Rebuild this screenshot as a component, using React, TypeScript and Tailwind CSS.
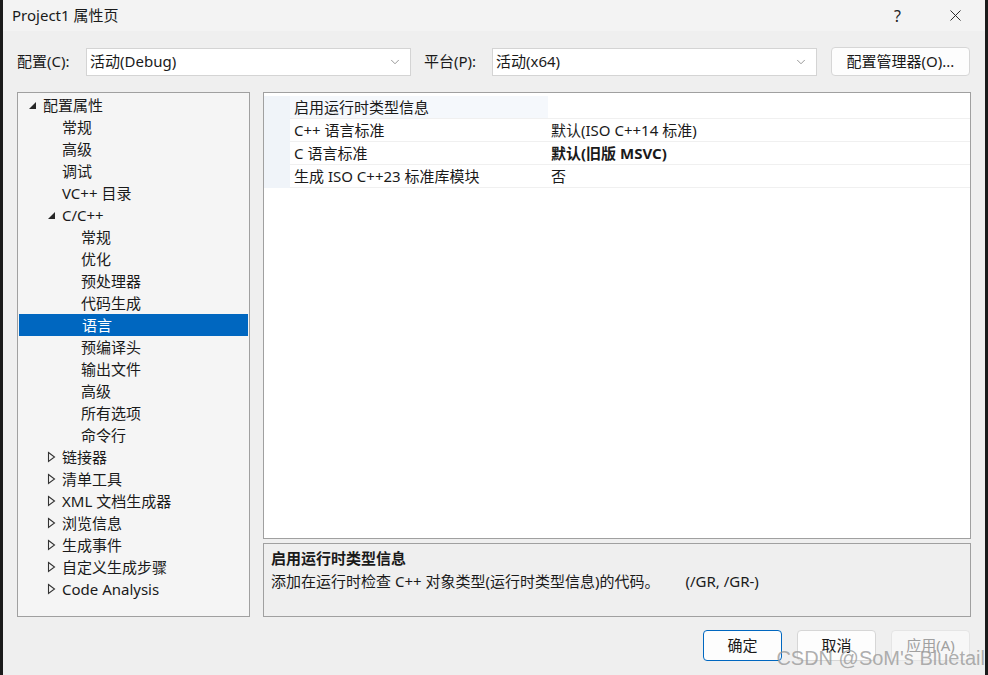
import { ChevronDown, X } from "lucide-react";

type TreeItem = {
  label: string;
  level: number;
  arrow?: "open" | "closed";
  selected?: boolean;
};

const tree: TreeItem[] = [
  { label: "配置属性", level: 0, arrow: "open" },
  { label: "常规", level: 1 },
  { label: "高级", level: 1 },
  { label: "调试", level: 1 },
  { label: "VC++ 目录", level: 1 },
  { label: "C/C++", level: 1, arrow: "open" },
  { label: "常规", level: 2 },
  { label: "优化", level: 2 },
  { label: "预处理器", level: 2 },
  { label: "代码生成", level: 2 },
  { label: "语言", level: 2, selected: true },
  { label: "预编译头", level: 2 },
  { label: "输出文件", level: 2 },
  { label: "高级", level: 2 },
  { label: "所有选项", level: 2 },
  { label: "命令行", level: 2 },
  { label: "链接器", level: 1, arrow: "closed" },
  { label: "清单工具", level: 1, arrow: "closed" },
  { label: "XML 文档生成器", level: 1, arrow: "closed" },
  { label: "浏览信息", level: 1, arrow: "closed" },
  { label: "生成事件", level: 1, arrow: "closed" },
  { label: "自定义生成步骤", level: 1, arrow: "closed" },
  { label: "Code Analysis", level: 1, arrow: "closed" },
];

const props = [
  { name: "启用运行时类型信息", value: "", current: true },
  { name: "C++ 语言标准", value: "默认(ISO C++14 标准)" },
  { name: "C 语言标准", value: "默认(旧版 MSVC)", bold: true },
  { name: "生成 ISO C++23 标准库模块", value: "否" },
];

const font = "font-['Noto_Sans','Noto_Sans_CJK_SC',sans-serif]";

const indent = ["pl-[10px]", "pl-[29px]", "pl-[48px]"];

function Arrow({ kind }: { kind?: "open" | "closed" }) {
  if (kind === "open") {
    return (
      <svg width="9" height="9" viewBox="0 0 9 9" className="shrink-0">
        <path d="M8 1 L8 8 L1 8 Z" fill="#262626" />
      </svg>
    );
  }
  if (kind === "closed") {
    return (
      <svg width="9" height="12" viewBox="0 0 9 12" className="shrink-0">
        <path d="M1.5 1.5 L7.5 6 L1.5 10.5 Z" fill="none" stroke="#333" strokeWidth="1.1" />
      </svg>
    );
  }
  return <span className="w-[9px] shrink-0" />;
}

function Combo({ text, width }: { text: string; width: string }) {
  return (
    <div
      className={`flex h-[28px] ${width} items-center justify-between border border-[#d4d4d4] bg-white pl-[3px] pr-[8px] text-[15px] text-[#1a1a1a]`}
    >
      <span>{text}</span>
      <ChevronDown className="size-[14px] text-[#777]" strokeWidth={1.3} />
    </div>
  );
}

function Button({
  children,
  primary,
  disabled,
}: {
  children: React.ReactNode;
  primary?: boolean;
  disabled?: boolean;
}) {
  return (
    <button
      type="button"
      className={`flex h-[31px] w-[79px] items-center justify-center rounded-[4px] border text-[15px] ${
        primary
          ? "border-[#0067c0] bg-[#fdfdfd] text-[#1a1a1a]"
          : disabled
            ? "border-[#e5e5e5] bg-[#f7f7f7] text-[#a0a0a0]"
            : "border-[#d6d6d6] bg-[#fdfdfd] text-[#1a1a1a]"
      }`}
    >
      {children}
    </button>
  );
}

export default function App() {
  return (
    <div className={`flex h-[675px] w-[988px] bg-[#1b1b1b] ${font}`}>
      <div className="ml-[3px] mr-[3px] flex flex-1 flex-col bg-[#efefef]">
        {/* Title bar */}
        <div className="flex h-[31px] items-center bg-[#f3f3f3] pl-[9px]">
          <span className="text-[15px] text-[#1a1a1a]">Project1 属性页</span>
          <span className="ml-auto mr-[45px] text-[16px] text-[#222]">?</span>
          <X className="mr-[20px] size-[19px] text-[#222]" strokeWidth={1.2} />
        </div>

        {/* Config row */}
        <div className="mt-[16px] flex items-center pl-[14px]">
          <span className="w-[69px] text-[15px] text-[#1a1a1a]">配置(C):</span>
          <Combo text="活动(Debug)" width="w-[325px]" />
          <span className="ml-[13px] w-[68px] text-[15px] text-[#1a1a1a]">平台(P):</span>
          <Combo text="活动(x64)" width="w-[325px]" />
          <div className="ml-[14px] flex h-[29px] w-[139px] items-center justify-center rounded-[4px] border border-[#d6d6d6] bg-[#fdfdfd] text-[15px] text-[#1a1a1a]">
            配置管理器(O)...
          </div>
        </div>

        {/* Main area */}
        <div className="mt-[16px] flex pl-[14px]">
          {/* Tree */}
          <div className="h-[525px] w-[233px] border border-[#a0a0a0] bg-[#f5f5f5] pt-[1px]">
            {tree.map((item, i) => (
              <div
                key={i}
                className={`flex h-[22px] items-center gap-[6px] ${indent[item.level]} ${
                  item.selected ? "mx-px bg-[#0067c0] text-white" : "text-[#1a1a1a]"
                } text-[15px]`}
              >
                <Arrow kind={item.arrow} />
                <span>{item.label}</span>
              </div>
            ))}
          </div>

          <div className="ml-[13px] flex w-[708px] flex-col">
            {/* Property grid */}
            <div className="h-[447px] border border-[#a0a0a0] bg-white pt-[3px]">
              {props.map((p, i) => (
                <div key={i} className="flex h-[23px]">
                  <div className="w-[26px] bg-[#f0f4f9]" />
                  <div
                    className={`flex w-[258px] items-center border-b border-[#f0f0f0] pl-[4px] text-[15px] text-[#1a1a1a] ${
                      p.current ? "bg-[#f5f8fc]" : ""
                    }`}
                  >
                    {p.name}
                  </div>
                  <div
                    className={`flex flex-1 items-center border-b border-[#f0f0f0] pl-[3px] text-[15px] text-[#1a1a1a] ${
                      p.bold ? "font-bold" : ""
                    }`}
                  >
                    {p.value}
                  </div>
                </div>
              ))}
            </div>

            {/* Description */}
            <div className="mt-[4px] h-[74px] border border-[#a0a0a0] bg-[#efefef] pl-[7px] pt-[3px]">
              <div className="text-[15px] font-bold leading-[22px] text-[#1a1a1a]">
                启用运行时类型信息
              </div>
              <div className="text-[15px] leading-[24px] text-[#1a1a1a]">
                添加在运行时检查 C++ 对象类型(运行时类型信息)的代码。
                <span className="ml-[26px]">(/GR, /GR-)</span>
              </div>
            </div>
          </div>
        </div>

        {/* Buttons */}
        <div className="relative mt-[13px] flex justify-end gap-[15px] pr-[15px]">
          <Button primary>确定</Button>
          <Button>取消</Button>
          <Button disabled>应用(A)</Button>
          <span className="absolute right-[0px] top-[13px] font-['Liberation_Sans',sans-serif] text-[20px] text-[#9a9a9a]/80">
            CSDN @SoM's Bluetail
          </span>
        </div>
      </div>
    </div>
  );
}
